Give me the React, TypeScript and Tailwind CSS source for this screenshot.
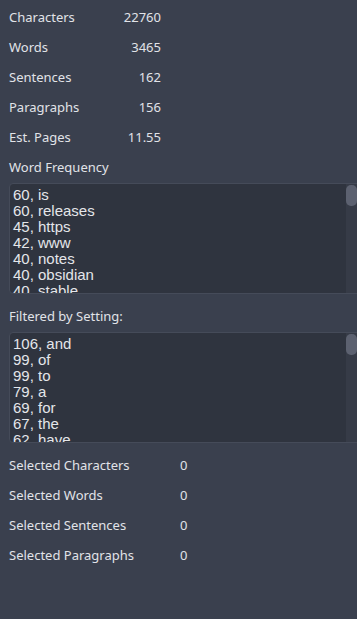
import React from 'react';

const stats: [string, string][] = [
  ['Characters', '22760'],
  ['Words', '3465'],
  ['Sentences', '162'],
  ['Paragraphs', '156'],
  ['Est. Pages', '11.55'],
];

const selected: [string, string][] = [
  ['Selected Characters', '0'],
  ['Selected Words', '0'],
  ['Selected Sentences', '0'],
  ['Selected Paragraphs', '0'],
];

const wordFrequency = ['60, is', '60, releases', '45, https', '42, www', '40, notes', '40, obsidian', '40, stable'];

const filtered = ['106, and', '99, of', '99, to', '79, a', '69, for', '67, the', '62, have'];

const ListBox: React.FC<{ lines: string[] }> = ({ lines }) => (
  <div className="relative ml-[9px] h-[111px] w-[352px] overflow-hidden rounded-[4px] border border-[#454b59] bg-[#2f343f]">
    <div className="pl-[3px] pt-[3px] font-['Liberation_Sans',Arial,sans-serif] text-[15px] leading-[16px] text-[#e4e6ea]">
      {lines.map((l) => (
        <div key={l}>{l}</div>
      ))}
    </div>
    {/* fake scrollbar */}
    <div className="absolute right-[3px] top-0 h-full w-[11px] bg-[#363b47]">
      <div className="mt-[1px] h-[21px] w-[11px] rounded-[5px] bg-[#5c6170]" />
    </div>
  </div>
);

export default function App() {
  return (
    <div className="min-h-[619px] w-[357px] overflow-hidden bg-[#3a404e] pt-[3px] font-['Noto_Sans',sans-serif] text-[13px] text-[#e1e3e8]">
      {stats.map(([k, v]) => (
        <div key={k} className="ml-[9px] flex h-[30px] w-[152px] items-center justify-between">
          <span>{k}</span>
          <span>{v}</span>
        </div>
      ))}
      <div className="ml-[9px] flex h-[30px] items-center">Word Frequency</div>
      <ListBox lines={wordFrequency} />
      <div className="ml-[9px] mt-[8px] flex h-[30px] items-center">Filtered by Setting:</div>
      <ListBox lines={filtered} />
      <div className="mt-[8px]">
        {selected.map(([k, v]) => (
          <div key={k} className="ml-[9px] flex h-[30px] items-center">
            <span className="w-[171px]">{k}</span>
            <span>{v}</span>
          </div>
        ))}
      </div>
    </div>
  );
}
